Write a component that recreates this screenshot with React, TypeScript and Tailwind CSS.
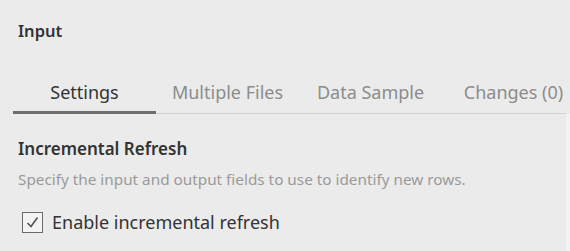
import React from "react";

export default function App() {
  const tabs = ["Settings", "Multiple Files", "Data Sample", "Changes (0)"];
  return (
    <div className="w-[570px] h-[251px] overflow-hidden bg-[#ebebeb] text-[#333333] flex" style={{ fontFamily: '"Noto Sans", sans-serif' }}>
      <div className="flex-1 min-w-0 flex flex-col">
        <div className="pl-[18px] pt-[19px] h-[64px] text-[16.5px] font-semibold leading-[24px]">Input</div>
        <div className="ml-[13px] flex border-b border-[#d2d2d2] h-[50px]">
          {tabs.map((t, i) => (
            <div
              key={t}
              className={
                "w-[143px] shrink-0 flex items-start justify-center pt-[16px] text-[18px] leading-[24px] whitespace-nowrap -mb-px " +
                (i === 0 ? "text-[#333333] border-b-[3px] border-[#6e6e6e]" : "text-[#8c8c8c] border-b-[3px] border-transparent")
              }
            >
              {t}
            </div>
          ))}
        </div>
        <div className="pl-[18px] pt-[23px] text-[17px] font-semibold leading-[24px]">Incremental Refresh</div>
        <div className="pl-[18px] pt-[8px] text-[15.3px] text-[#9a9a9a] leading-[20px] whitespace-nowrap">Specify the input and output fields to use to identify new rows.</div>
        <div className="pl-[22px] pt-[21px] flex items-center gap-[9px]">
          <div className="w-[21px] h-[21px] border border-[#6b6b6b] bg-[#f4f4f4] flex items-center justify-center">
            <svg width="15" height="15" viewBox="0 0 15 15" fill="none">
              <path d="M2.5 8 L6 11.5 L12.5 2.5" stroke="#555" strokeWidth="1.6" />
            </svg>
          </div>
          <span className="text-[18px] leading-[24px] whitespace-nowrap">Enable incremental refresh</span>
        </div>
      </div>
      <div className="w-[4px] mt-[114px] bg-[#f2f2f2]" />
    </div>
  );
}
